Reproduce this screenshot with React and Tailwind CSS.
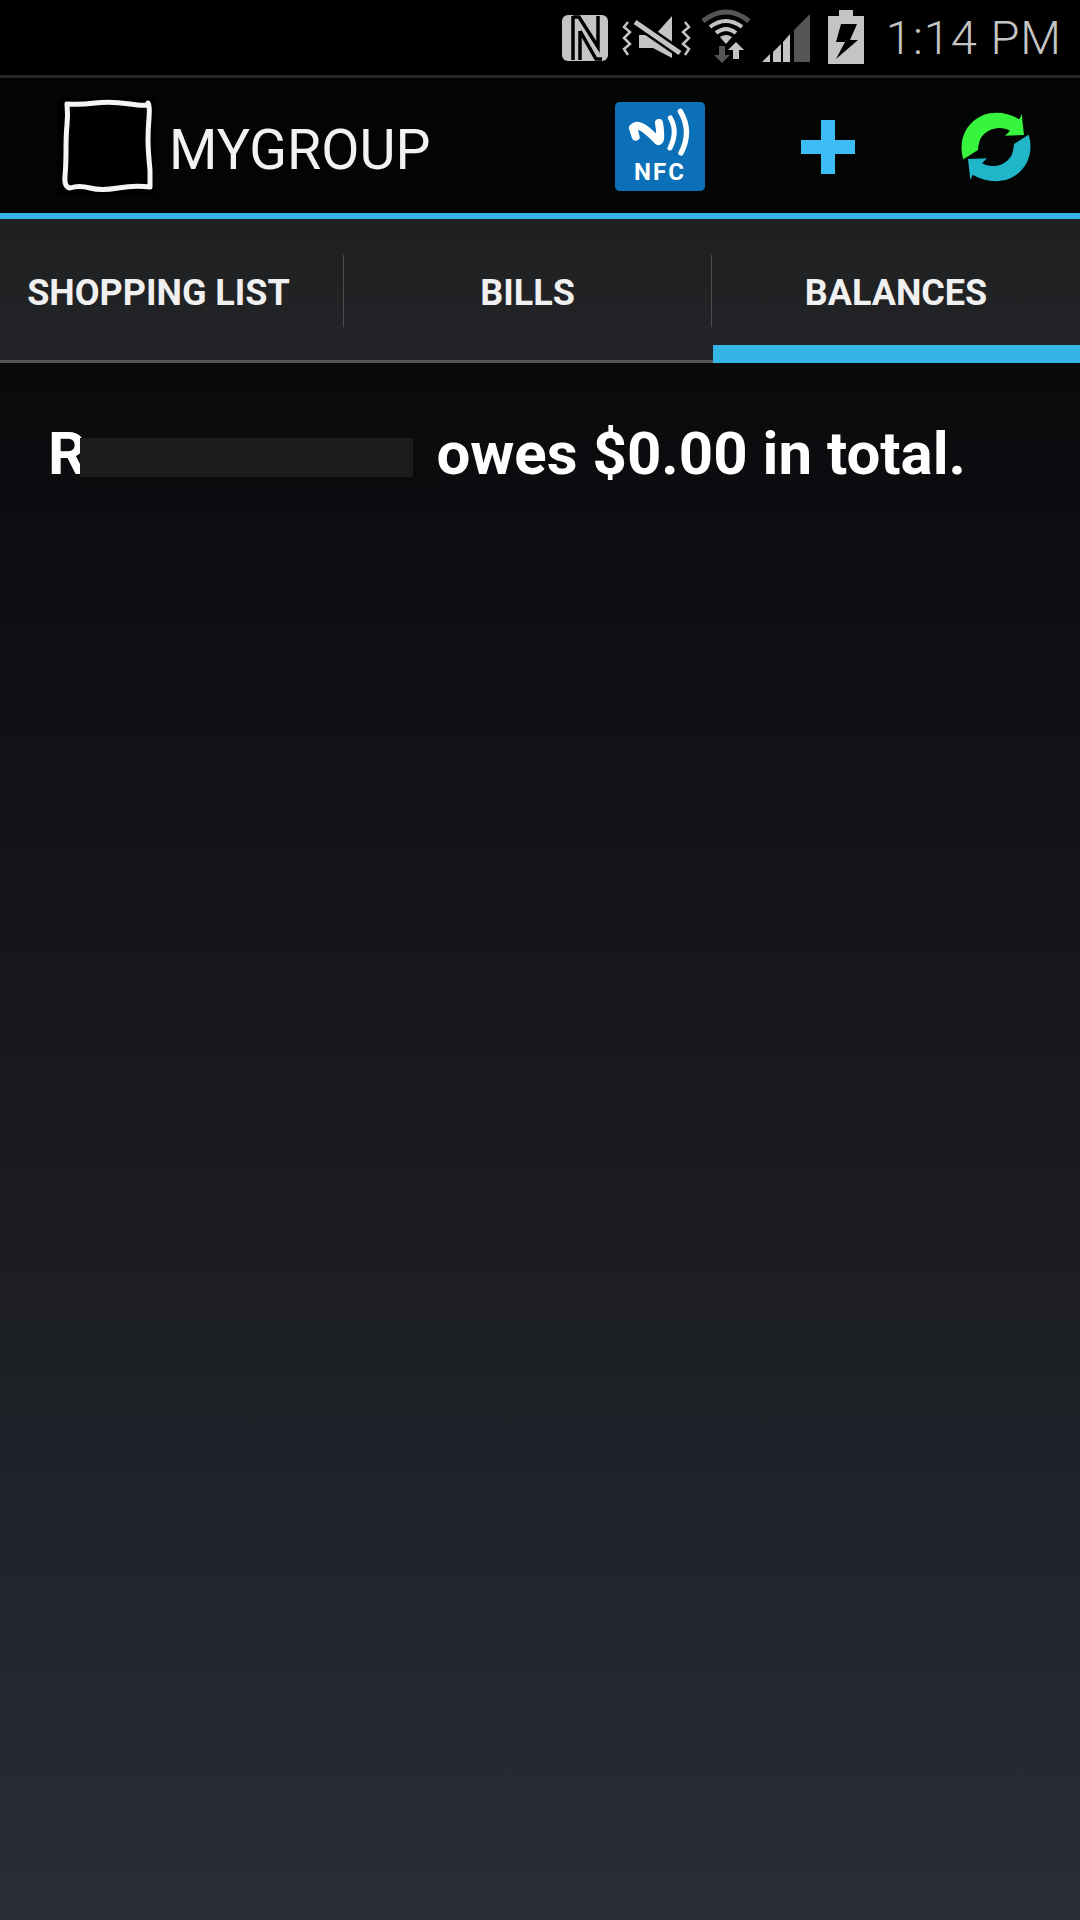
import { Fragment } from "react";

const grey = "#c4c4c4";
const dark = "#555555";

// drawn in page coordinates so the numbers line up with the screenshot
const StatusIcons = () => (
  <svg width="310" height="75" viewBox="560 0 310 75" className="shrink-0">
    {/* nfc n-mark */}
    <rect x="564" y="15" width="46" height="46" rx="6" fill={grey} />
    <path d="M575 16 V60 M575 17 H581 L600 47 V16 M582 31 V60 M582 31 L598 59 H604" fill="none" stroke="#000" strokeWidth="3.5" />
    {/* vibrate + muted speaker */}
    <path d="M630 22 L626 27 L632 32 L626 38 L632 44 L626 49 L630 55" fill="none" stroke={grey} strokeWidth="2.5" />
    <path d="M687 22 L691 27 L685 32 L691 38 L685 44 L691 49 L687 55" fill="none" stroke={grey} strokeWidth="2.5" />
    <path d="M641 35 H657 L674 16 V58 L655 48 H641 Z" fill={grey} />
    <path d="M637 22 L682 53" stroke="#000" strokeWidth="10" />
    <path d="M637 22 L682 53" stroke={grey} strokeWidth="5" />
    {/* wifi */}
    <path d="M705 21 Q728 3 751 21" fill="none" stroke={dark} strokeWidth="5" />
    <path d="M712 27 Q728 15 744 27" fill="none" stroke={grey} strokeWidth="4" />
    <path d="M718 33 Q728 25 738 33" fill="none" stroke={grey} strokeWidth="4" />
    <path d="M722 37 Q728 33 734 37 L728 44 Z" fill={grey} />
    <path d="M721 46 H727 V55 H732 L724 63 L716 55 H721 Z" fill={dark} />
    <path d="M735 59 V50 H730 L738 42 L746 50 H741 V59 Z" fill={grey} />
    {/* signal */}
    <path d="M764 62 L772 54 V62 Z" fill={grey} />
    <path d="M775 52 L783 44 V62 H775 Z" fill={grey} />
    <path d="M785 42 L792 34 V62 H785 Z" fill={grey} />
    <path d="M796 30 L812 14 V62 H796 Z" fill={dark} />
    {/* battery */}
    <rect x="841" y="10" width="14" height="7" fill={grey} />
    <rect x="830" y="16" width="36" height="48" fill={grey} />
    <path d="M843 24 H859 L852 40 H860 L838 59 L847 42 H838 Z" fill="#000" />
  </svg>
);

const Logo = () => (
  <svg width="97" height="97" viewBox="58 98 97 97" className="shrink-0">
    <rect x="58" y="98" width="97" height="97" fill="#000" />
    <path
      d="M67 104 Q80 105 95 103 T130 104 T148 103 Q150 106 149 118 T148 140 T150 170 L150 187 Q135 185 118 188 T90 188 T70 188 Q64 187 65 176 T66 150 T67 125 T67 104 Z"
      fill="none"
      stroke="#f5f5f5"
      strokeWidth="5"
      strokeLinejoin="round"
    />
  </svg>
);

const NfcIcon = () => (
  <svg width="90" height="89" viewBox="30 22 270 267" className="shrink-0">
    <rect x="30" y="22" width="270" height="267" rx="14" fill="#0b70b8" />
    <path d="M84 100 C100 82 125 105 158 138 C170 148 165 100 162 85 M84 100 L92 126" fill="none" stroke="#fff" strokeWidth="24" strokeLinecap="round" />
    <path d="M196 70 Q220 110 195 160" fill="none" stroke="#fff" strokeWidth="15" strokeLinecap="round" />
    <path d="M226 50 Q262 110 228 175" fill="none" stroke="#fff" strokeWidth="16" strokeLinecap="round" />
    <text x="165" y="256" textAnchor="middle" fill="#fff" fontSize="72" letterSpacing="6" fontWeight="700" fontFamily="Roboto, sans-serif">NFC</text>
  </svg>
);

const PlusIcon = () => (
  <svg width="54" height="54" viewBox="0 0 54 54" className="shrink-0">
    <path d="M20 0 H34 V20 H54 V34 H34 V54 H20 V34 H0 V20 H20 Z" fill="#3dbcf5" />
  </svg>
);

const SyncIcon = () => (
  <svg width="72" height="72" viewBox="30 33 216 216" className="shrink-0">
    <path d="M40 178 C25 130 40 70 100 45 C135 33 175 38 208 58 L215 42 L222 105 L165 107 L180 92 C150 75 110 85 92 115 C88 125 85 135 84 150 Z" fill="#36f53c" />
    <path d="M236 104 C251 152 236 212 176 237 C141 249 101 244 68 224 L61 240 L54 177 L111 175 L96 190 C126 207 166 197 184 167 C188 157 191 147 192 132 Z" fill="#20b5c8" />
  </svg>
);

const tabs = [
  { label: "SHOPPING LIST", width: "w-[343px] pr-[26px]" },
  { label: "BILLS", width: "w-[367px]" },
  { label: "BALANCES", width: "flex-1" },
];

export default function App() {
  return (
    <div className="w-[1080px] h-[1920px] flex flex-col font-['Roboto',sans-serif] bg-black overflow-hidden">
      {/* Status bar */}
      <div className="h-[75px] shrink-0 flex items-center justify-end pr-[18px]">
        <StatusIcons />
        <div className="text-[47px] leading-none font-light text-[#c4c4c4] ml-[18px] tracking-[1px] whitespace-nowrap">1:14 PM</div>
      </div>
      <div className="h-[3px] shrink-0 bg-[#262626]" />

      {/* Action bar */}
      <div className="h-[135px] shrink-0 flex items-center bg-[#030404] pl-[58px] pt-[2px]">
        <Logo />
        <div className="text-[55.5px] leading-none text-[#f2f2f2] ml-[14px] pt-[8px] w-[446px]">MYGROUP</div>
        <NfcIcon />
        <div className="ml-[96px]"><PlusIcon /></div>
        <div className="ml-[105px]"><SyncIcon /></div>
      </div>
      <div className="h-[6px] shrink-0 bg-[#33b5e5]" />

      {/* Tabs */}
      <div className="h-[144px] shrink-0 flex bg-gradient-to-b from-[#1e2020] to-[#232428] border-b-[3px] border-[#555555]">
        {tabs.map((tab, i) => (
          <Fragment key={tab.label}>
            {i > 0 && <div className="w-[1px] h-[72px] mt-[36px] bg-[#4a4c4e]" />}
            <div className={`${tab.width} relative flex items-center justify-center pt-[6px] text-[36px] font-bold text-[#f0f0f0] whitespace-nowrap`}>
              {tab.label}
              {i === 2 && <div className="absolute left-[1px] right-0 -bottom-[3px] h-[18px] bg-[#33b5e5]" />}
            </div>
          </Fragment>
        ))}
      </div>

      {/* Balances */}
      <div className="flex-1 bg-gradient-to-b from-[#090a0c] to-[#2a2d36] pl-[48px] pt-[53px]">
        <div className="flex items-start text-[60px] leading-[76px] font-bold text-white whitespace-nowrap">
          <span>R</span>
          {/* redacted name sits over the tail of the R */}
          <div className="relative -ml-[6px] w-[353px] h-[50px] mt-[22px] bg-[#0b0b0b] shrink-0">
            <div className="w-[333px] h-[39px] bg-[#1c1c1c]" />
          </div>
          <span className="ml-[3px]">owes $0.00 in total.</span>
        </div>
      </div>
    </div>
  );
}
